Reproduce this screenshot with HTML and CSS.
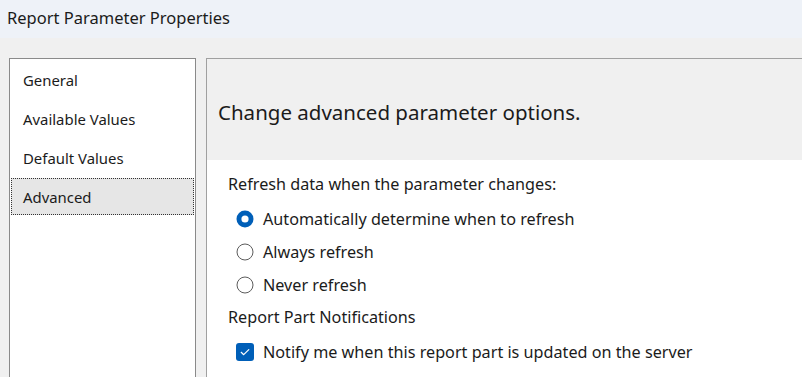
FILE: index.html
```html
<!DOCTYPE html>
<html lang="en">
<head>
  <meta charset="UTF-8">
  <meta name="viewport" content="width=device-width, initial-scale=1.0">
  <title>Report Parameter Properties</title>
  <link rel="stylesheet" href="styles.css">
</head>
<body>
  <div class="title-bar">Report Parameter Properties</div>
  <div class="dialog">
    <div class="nav">
      <div class="nav-item">General</div>
      <div class="nav-item">Available Values</div>
      <div class="nav-item">Default Values</div>
      <div class="nav-item selected">Advanced</div>
    </div>
    <div class="page">
      <div class="page-header">Change advanced parameter options.</div>
      <div class="page-body">
        <div class="group-label">Refresh data when the parameter changes:</div>
        <div class="option">
          <svg class="radio" width="18" height="18" viewBox="0 0 18 18">
            <circle cx="9" cy="9" r="8.5" fill="#005fb8"/>
            <circle cx="9" cy="9" r="3.6" fill="#fff"/>
          </svg>
          <span>Automatically determine when to refresh</span>
        </div>
        <div class="option">
          <svg class="radio" width="18" height="18" viewBox="0 0 18 18">
            <circle cx="9" cy="9" r="8" fill="#fff" stroke="#5c5c5c" stroke-width="1"/>
          </svg>
          <span>Always refresh</span>
        </div>
        <div class="option">
          <svg class="radio" width="18" height="18" viewBox="0 0 18 18">
            <circle cx="9" cy="9" r="8" fill="#fff" stroke="#5c5c5c" stroke-width="1"/>
          </svg>
          <span>Never refresh</span>
        </div>
        <div class="group-label notif">Report Part Notifications</div>
        <div class="option check-row">
          <svg class="check" width="18" height="18" viewBox="0 0 18 18">
            <rect x="0" y="0" width="18" height="18" rx="3" fill="#005fb8"/>
            <path d="M5.2 9.3 L7.7 11.7 L12.8 6.6" fill="none" stroke="#fff" stroke-width="1.2" stroke-linecap="round" stroke-linejoin="round"/>
          </svg>
          <span>Notify me when this report part is updated on the server</span>
        </div>
      </div>
    </div>
  </div>
</body>
</html>
```

FILE: styles.css
```css
body {
  margin: 0;
  padding: 0;
  font-family: "Noto Sans", "Open Sans", Arial, sans-serif;
  color: #1b1b1b;
  background-color: #f0f0f0;
  height: 100vh;
  display: flex;
  flex-direction: column;
  overflow: hidden;
}

.title-bar {
  height: 38px;
  flex-shrink: 0;
  line-height: 36px;
  padding-left: 7px;
  font-size: 16.5px;
  background-color: #eef2f8;
}

.dialog {
  flex: 1;
  min-height: 0;
  display: flex;
  gap: 10px;
  padding: 20px 0 0 9px;
}

.nav {
  width: 187px;
  flex-shrink: 0;
  background: #fff;
  border: 1px solid #8a8a8a;
  border-bottom: none;
  padding-top: 2px;
  box-sizing: border-box;
}

.nav-item {
  height: 37px;
  margin: 0 1px 2px 1px;
  padding-left: 11px;
  display: flex;
  align-items: center;
  font-size: 14.9px;
  border: 1px dotted transparent;
  box-sizing: border-box;
}

.nav-item.selected {
  background-color: #e6e6e6;
  border-color: #333;
}

.page {
  flex: 1;
  min-width: 0;
  border-top: 1px solid #a0a0a0;
  border-left: 1px solid #a0a0a0;
  background: #fff;
  overflow: hidden;
}

.page-header {
  height: 101px;
  padding-left: 11px;
  padding-top: 4px;
  display: flex;
  align-items: center;
  font-size: 20.5px;
  background-color: #f0f0f0;
  box-sizing: border-box;
}

.page-body {
  padding: 5px 0 0 21px;
  font-size: 16.2px;
}

.group-label {
  height: 37px;
  display: flex;
  align-items: center;
}

.group-label.notif {
  height: 31px;
}

.option {
  height: 33px;
  display: flex;
  align-items: center;
  gap: 9px;
  padding-left: 8px;
  white-space: nowrap;
}

.option.check-row {
  height: 40px;
}

.radio, .check {
  flex-shrink: 0;
}
```
